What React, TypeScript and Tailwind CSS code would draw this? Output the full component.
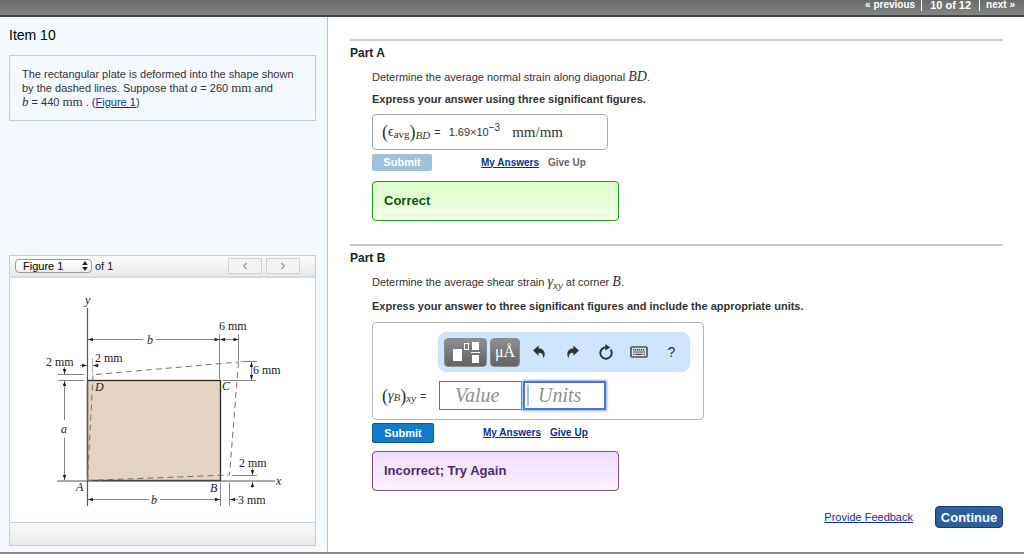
import React, { useState } from 'react';
import clsx from 'clsx';
import { ChevronLeft, ChevronRight } from 'lucide-react';

const SANS = "font-['Liberation_Sans',Arial,sans-serif]";
const SERIF = "font-['Liberation_Serif','Times_New_Roman',serif]";

interface MathProps {
    children: React.ReactNode;
    italic?: boolean;
    className?: string;
}

function MathText({ children, italic, className }: MathProps) {
    return (
        <span className={clsx(SERIF, 'leading-none', italic && 'italic', className || 'text-sm leading-none')}>
            {children}
        </span>
    );
}

function Header() {
    return (
        <header className="h-[17px] shrink-0 overflow-hidden border-b-2 border-[#444444] bg-linear-to-b from-[#696c6b] to-[#858585]">
            <nav className="flex h-2.5 items-center justify-end pr-[9px] text-[10px] leading-none font-bold text-white">
                <a href="#previous" className="pr-1.5">« previous</a>
                <span className="border-x border-white px-2 text-[11px] leading-none">10 of 12</span>
                <a href="#next" className="pl-1.5">next »</a>
            </nav>
        </header>
    );
}

/* Small filled arrow head with its tip at x,y */
function Head({ x, y, dir }: { x: number; y: number; dir: 'l' | 'r' | 'u' | 'd' }) {
    const angle = { l: 0, u: 90, r: 180, d: 270 }[dir];
    return <path d="M0 0 L5 -1.7 L5 1.7 Z" fill="#222" stroke="none" transform={`translate(${x} ${y}) rotate(${angle})`} />;
}

function PlateFigure() {
    return (
        <svg viewBox="0 0 305 244" className="block w-full" role="img" aria-label="Deformed rectangular plate">
            <rect x="77.5" y="102.5" width="133" height="100" fill="#e4d4c4" stroke="#2b2826" strokeWidth="1.3" />

            {/* axes */}
            <g stroke="#555" strokeWidth="1.2" fill="none">
                <path d="M77.5 30V228" />
                <path d="M47 203H265" />
            </g>

            {/* deformed outline */}
            <g stroke="#77716d" strokeWidth="1" fill="none" strokeDasharray="6 4">
                <path d="M77.5 202.5L83 97" />
                <path d="M86 96.500L228.500 84" />
                <path d="M228.500 84L219.500 197" />
                <path d="M77.500 202.500L219 197" />
            </g>

            {/* dimension and extension lines */}
            <g stroke="#777" strokeWidth="0.9" fill="none">
                <path d="M78 61.500H133M146 61.500H228.500" />
                <path d="M209.500 56V101M228.500 56V83" />
                <path d="M82.500 80V96" stroke="#aaa" />
                <path d="M70 87.500H77M83 87.500H89" />
                <path d="M48 96.500H74M48 102.500H74" />
                <path d="M54.500 89V96M54.500 103V142M54.500 160V202" />
                <path d="M231 83.500H247M213 102.500H246M241.500 84V102" />
                <path d="M222 197.500H247M242.500 190V197M242.500 204V210" />
                <path d="M78 221.500H139M150 221.500H210" />
                <path d="M210.500 205V228M219.500 205V228M220 221.500H228" />
            </g>

            <Head x={78} y={61.5} dir="l" />
            <Head x={209.5} y={61.5} dir="r" />
            <Head x={210} y={61.5} dir="l" />
            <Head x={228.5} y={61.5} dir="r" />
            <Head x={77} y={87.5} dir="r" />
            <Head x={83} y={87.5} dir="l" />
            <Head x={54.5} y={96} dir="d" />
            <Head x={54.5} y={103} dir="u" />
            <Head x={54.5} y={202} dir="d" />
            <Head x={241.5} y={84} dir="u" />
            <Head x={241.5} y={102} dir="d" />
            <Head x={242.5} y={197} dir="d" />
            <Head x={242.5} y={204} dir="u" />
            <Head x={78} y={221.5} dir="l" />
            <Head x={210} y={221.5} dir="r" />
            <Head x={220} y={221.5} dir="l" />

            <g className={clsx(SERIF, 'text-xs')} fill="#222">
                <text x="209" y="52">6 mm</text>
                <text x="36" y="88">2 mm</text>
                <text x="85" y="84">2 mm</text>
                <text x="243" y="96">6 mm</text>
                <text x="229" y="189">2 mm</text>
                <text x="228" y="226">3 mm</text>
                <g className="italic">
                    <text x="75" y="26">y</text>
                    <text x="137" y="66">b</text>
                    <text x="141" y="226">b</text>
                    <text x="51" y="155">a</text>
                    <text x="85" y="113">D</text>
                    <text x="212" y="112">C</text>
                    <text x="66" y="213">A</text>
                    <text x="200" y="214">B</text>
                    <text x="266" y="207">x</text>
                </g>
            </g>
        </svg>
    );
}

function FigurePanel() {
    const [figure, setFigure] = useState('1');

    return (
        <section className="border border-[#c0d0e0] bg-white">
            <div className="flex h-[22px] items-center border-b-2 border-[#cfdeeb] bg-linear-to-b from-[#fbfbfb] to-[#e9e9e9] pr-[15px] pl-[5px] text-[11px] text-[#222]">
                <div className="relative">
                    <select
                        aria-label="Figure"
                        value={figure}
                        onChange={(e) => setFigure(e.target.value)}
                        className="block h-[14px] w-[77px] appearance-none rounded-sm border border-[#999999] bg-linear-to-b from-white to-[#eeeeee] pl-[7px] text-[11px] leading-none text-black"
                    >
                        <option value="1">Figure 1</option>
                    </select>
                    <svg viewBox="0 0 6 10" className="pointer-events-none absolute top-0.5 right-1 h-2.5 w-1.5" fill="#222">
                        <path d="M3 0L5.800 4H.2ZM3 10L5.800 6H.2Z" />
                    </svg>
                </div>
                <span className="ml-[3px]">of 1</span>
                <div className="ml-auto flex gap-1">
                    <button aria-label="Previous figure" className="flex h-4 w-[34px] items-center justify-center border border-[#d2d2d2] bg-[#f3f3f3]">
                        <ChevronLeft className="h-2.5 w-2.5 text-[#a5a5a5]" strokeWidth={4} />
                    </button>
                    <button aria-label="Next figure" className="flex h-4 w-[34px] items-center justify-center border border-[#d2d2d2] bg-[#f3f3f3]">
                        <ChevronRight className="h-2.5 w-2.5 text-[#a5a5a5]" strokeWidth={4} />
                    </button>
                </div>
            </div>
            <PlateFigure />
            <div className="h-[23px] border-t border-[#c0d0e0] bg-linear-to-b from-[#fbfbfb] to-[#e9e9e9]" />
        </section>
    );
}

function Sidebar() {
    const symbol = 'text-[13px] leading-none';

    return (
        <aside className="flex w-[328px] shrink-0 flex-col border-r border-[#b4c5d6] bg-[#f4f9ff] pt-2.5 pr-[11px] pb-1.5 pl-[9px]">
            <h1 className="text-sm leading-4 text-black">Item 10</h1>
            <p className="mt-3 mb-6 border border-[#bccfdf] px-3 py-[11px] text-[11px] leading-[14px] text-[#333]">
                The rectangular plate is deformed into the shape shown by the dashed lines. Suppose that{' '}
                <MathText italic className={symbol}>a</MathText> = 260 <MathText className={symbol}>mm</MathText> and
                <br />
                <MathText italic className={symbol}>b</MathText> = 440 <MathText className={symbol}>mm</MathText> . (
                <a href="#figure" className="text-[#0a3296] underline">Figure 1</a>)
            </p>
            <div className="mt-auto">
                <FigurePanel />
            </div>
        </aside>
    );
}

function TemplateIcon() {
    return (
        <svg viewBox="0 0 28 22" className="h-[22px] w-7" fill="none">
            <rect x="1" y="8" width="9" height="12" fill="white" />
            <rect x="12.5" y="2.500" width="4" height="6" stroke="white" />
            <rect x="20" y="1" width="7" height="8" fill="white" />
            <path d="M19 11.500H28" stroke="white" />
            <rect x="20" y="14" width="7" height="8" fill="white" />
        </svg>
    );
}

function UndoIcon({ flip }: { flip?: boolean }) {
    return (
        <svg viewBox="0 0 12 13" className={clsx('h-3.5 w-[13px]', flip && '-scale-x-100')} fill="#333">
            <path d="M0 5.200L5.200 .5V3.300C9.500 3.200 12.600 6.800 9.600 12.500C9.700 9 8.400 7.200 5.200 7.200V10Z" />
        </svg>
    );
}

function ResetIcon() {
    return (
        <svg viewBox="0 0 14 16" className="h-4 w-3.5" fill="none">
            <path d="M11.600 5.600A5.700 5.700 0 1 1 7 3.300" stroke="#333" strokeWidth="1.900" />
            <path d="M6.400 0L11.200 3.400L6.400 6.600Z" fill="#333" />
        </svg>
    );
}

function KeyboardIcon() {
    return (
        <svg viewBox="0 0 18 12" className="h-3 w-[18px]" fill="none">
            <rect x="1" y="1" width="16" height="10" rx="1" fill="#dbe6f0" stroke="#4a4f55" strokeWidth="1.600" />
            <path d="M3 3.700H15M3.500 6H15" stroke="#4a4f55" strokeWidth="1.400" strokeDasharray="1.300 .7" />
            <path d="M3 8.400H4.300M5.300 8.400H12.500M13.500 8.400H15" stroke="#4a4f55" strokeWidth="1.300" />
        </svg>
    );
}

function Toolbar() {
    const tile = 'flex h-[29px] items-center justify-center rounded border border-[#8b8b90] bg-linear-to-b from-[#8e8e93] to-[#636366]';
    const tool = 'flex h-7 w-[33px] items-center justify-center';

    return (
        <div className="ml-[65px] flex h-10 w-[252px] items-center rounded-lg border border-[#d5dde6] bg-[#cee4ff] pl-[5px]">
            <button aria-label="Templates" className={clsx(tile, 'w-[43px]')}>
                <TemplateIcon />
            </button>
            <button aria-label="Units" className={clsx(tile, SERIF, 'ml-[3px] w-[30px] text-base leading-none text-white')}>
                μÅ
            </button>
            <div className="ml-[3px] flex">
                <button aria-label="Undo" className={tool}><UndoIcon /></button>
                <button aria-label="Redo" className={tool}><UndoIcon flip /></button>
                <button aria-label="Reset" className={tool}><ResetIcon /></button>
                <button aria-label="Keyboard shortcuts" className={tool}><KeyboardIcon /></button>
                <button aria-label="Help" className={clsx(tool, 'text-sm text-[#333]')}>?</button>
            </div>
        </div>
    );
}

function PartA() {
    return (
        <section className="border-t-2 border-[#cccccc] pt-1 pb-[23px]">
            <h2 className="text-xs leading-4 font-bold text-[#222]">Part A</h2>
            <div className="pl-[22px] text-[11px] leading-4 text-[#333]">
                <p className="mt-2">
                    Determine the average normal strain along diagonal <MathText italic>BD</MathText>.
                </p>
                <p className="mt-1.5 font-bold">Express your answer using three significant figures.</p>
                <div className="mt-[7px] flex h-9 w-[236px] items-center rounded border border-[#aaaaaa] pl-[9px]">
                    <MathText className="text-lg">(</MathText>
                    <MathText className="text-sm">ϵ</MathText>
                    <MathText className="mt-1 text-[11px]">avg</MathText>
                    <MathText className="text-lg">)</MathText>
                    <MathText italic className="mt-1.5 text-[11px]">BD</MathText>
                    <span className="ml-1">=</span>
                    <span className="ml-2">1.69×10<sup className="text-[10px]">−3</sup></span>
                    <MathText className="ml-3 text-[15px]">mm/mm</MathText>
                </div>
                <div className="mt-1 flex items-center text-[10px] font-bold">
                    <button disabled className="h-[17px] w-[60px] rounded-xs bg-[#9fc1dc] text-[11px] leading-none text-white">Submit</button>
                    <a href="#answers" className="ml-[49px] text-[#0a2f8c] underline">My Answers</a>
                    <span className="ml-[9px] text-[#666]">Give Up</span>
                </div>
                <div role="status" className="mt-2.5 flex h-10 w-[247px] items-center rounded border border-[#189a18] bg-linear-to-b from-[#dcfcc8] to-[#f3ffec] pl-[11px] text-[13px] font-bold text-[#0b560b]">
                    Correct
                </div>
            </div>
        </section>
    );
}

function PartB() {
    const [value, setValue] = useState('');
    const [units, setUnits] = useState('');
    const field = clsx(SERIF, 'h-[29px] w-[83px] bg-white text-xl italic text-[#333] outline-none placeholder:text-[#8f8f8f]');

    return (
        <section className="border-t-2 border-[#cccccc] pt-1">
            <h2 className="text-xs leading-4 font-bold text-[#222]">Part B</h2>
            <div className="pl-[22px] text-[11px] leading-4 text-[#333]">
                <p className="mt-2">
                    Determine the average shear strain <MathText italic>γ<sub className="text-[11px]">xy</sub></MathText> at corner{' '}
                    <MathText italic>B</MathText>.
                </p>
                <p className="mt-2 font-bold">Express your answer to three significant figures and include the appropriate units.</p>
                <div className="mt-2 h-[98px] w-[332px] rounded border border-[#b5b5b5] pt-[9px]">
                    <Toolbar />
                    <div className="mt-[9px] flex items-center pl-[9px]">
                        <div className="flex w-[57px] items-center">
                            <MathText className="text-lg">(</MathText>
                            <MathText italic className="text-sm">γ</MathText>
                            <MathText italic className="mt-1 text-[11px]">B</MathText>
                            <MathText className="text-lg">)</MathText>
                            <MathText italic className="mt-1.5 text-[11px]">xy</MathText>
                            <span className="ml-1">=</span>
                        </div>
                        <input
                            aria-label="Value"
                            placeholder="Value"
                            value={value}
                            onChange={(e) => setValue(e.target.value)}
                            className={clsx(field, 'border border-[#3f78d0] pl-[15px]')}
                        />
                        <div className="relative ml-px">
                            <input
                                aria-label="Units"
                                placeholder="Units"
                                value={units}
                                onChange={(e) => setUnits(e.target.value)}
                                className={clsx(field, 'block border-2 border-[#4a76d0] pl-[13px] shadow-[0_0_2px_1px_#8fb0ec]')}
                            />
                            <span className="absolute top-1 left-1 h-[21px] w-0.5 bg-[#a9bdf3]" />
                        </div>
                    </div>
                </div>
                <div className="mt-[3px] flex items-center text-[10px] font-bold">
                    <button className="h-5 w-[62px] rounded-xs border border-[#0a5a9c] bg-[#107acb] text-[11px] leading-none text-white">Submit</button>
                    <a href="#answers" className="ml-[49px] text-[#0a2f8c] underline">My Answers</a>
                    <a href="#giveup" className="ml-[9px] text-[#0a2f8c] underline">Give Up</a>
                </div>
                <div role="status" className="mt-2 flex h-10 w-[247px] items-center rounded border border-[#7d4a93] bg-linear-to-b from-[#f1dcfe] to-[#fdf2ff] pl-[11px] text-[13px] font-bold text-[#4f2a6b]">
                    Incorrect; Try Again
                </div>
            </div>
        </section>
    );
}

export default function App() {
    return (
        <div className={clsx(SANS, 'flex min-h-screen flex-col border-b-2 border-[#8d8d8d] bg-white')}>
            <Header />
            <div className="flex flex-1">
                <Sidebar />
                <main className="min-w-0 flex-1 pt-[22px] pr-[21px] pb-5 pl-[22px]">
                    <PartA />
                    <PartB />
                    <div className="mt-[15px] flex items-center justify-end gap-[22px]">
                        <a href="#feedback" className="text-[11px] text-[#0a3296] underline">Provide Feedback</a>
                        <button className="h-[22px] w-[68px] rounded border border-[#123f73] bg-[#2c5f9e] text-[13px] leading-none font-bold text-white">
                            Continue
                        </button>
                    </div>
                </main>
            </div>
        </div>
    );
}
